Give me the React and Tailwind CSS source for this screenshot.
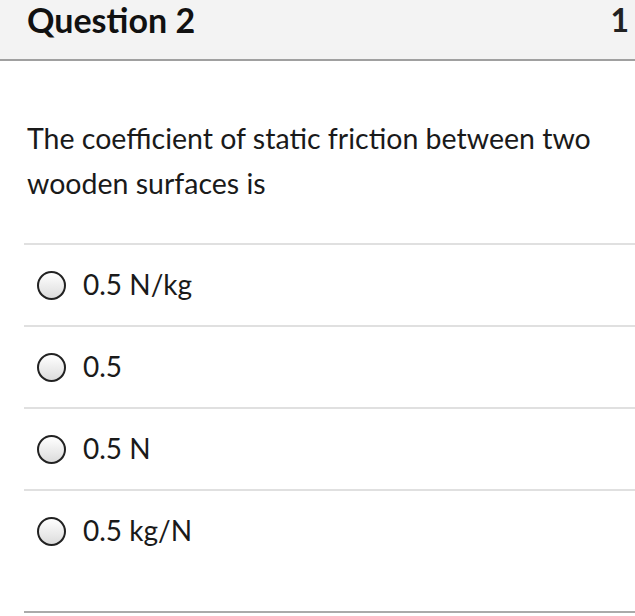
export default function App() {
  const options = ["0.5 N/kg", "0.5", "0.5 N", "0.5 kg/N"]
  return (
    <div className="w-[635px] h-[616px] bg-white overflow-hidden" style={{ fontFamily: "Lato, 'Open Sans', sans-serif" }}>
      {/* Header */}
      <div className="h-[61px] bg-[#f3f3f3] border-b-2 border-[#a0a0a0] flex items-start justify-between pl-[27px] pr-[6px]">
        <div className="text-[34px] font-bold text-[#111] leading-[40px]">Question 2</div>
        <div className="text-[32px] font-bold text-[#222] leading-[40px]">1</div>
      </div>

      {/* Question text */}
      <div className="pl-[27px] pr-[20px] pt-[55px] text-[28.5px] leading-[45px] text-[#1a1a1a]">
        The coefficient of static friction between two wooden surfaces is
      </div>

      {/* Options */}
      <div className="ml-[24px] mt-[37px] border-b-2 border-[#aaa]">
        {options.map((o, i) => (
          <div key={i} className="h-[82px] border-t-2 border-[#e0e0e0] flex items-center">
            <div className="ml-[13px] w-[29px] h-[29px] rounded-full border-2 border-[#222] bg-gradient-to-b from-white to-[#dcdcdc]"></div>
            <div className="ml-[17px] text-[28px] leading-[40px] -mt-[2px] text-[#1a1a1a]">{o}</div>
          </div>
        ))}
        <div className="h-[40px]"></div>
      </div>
    </div>
  )
}
